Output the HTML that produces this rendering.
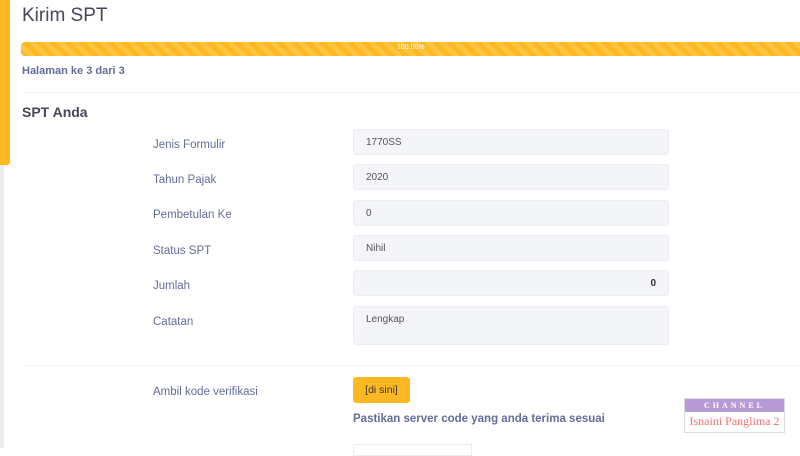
<!DOCTYPE html><html><head><style>
body{margin:0;width:800px;height:448px;overflow:hidden;background:#fff;font-family:"Liberation Sans",sans-serif;position:relative}
.a{position:absolute}
.lbl{position:absolute;left:153px;font-size:11.5px;color:#646c9a}
.in{position:absolute;left:353px;width:316px;height:26px;background:#f4f5f8;border:1px solid #ebedf2;border-radius:3px;box-sizing:border-box;font-size:10px;color:#555;padding:7px 12px}
</style></head><body>
<div class="a" style="left:0;top:0;width:4px;height:448px;background:#ebedf2"></div>
<div class="a" style="left:0;top:0;width:10px;height:165px;background:#ffb822;border-radius:0 0 3px 0"></div>
<div class="a" style="left:22px;top:5px;font-size:19px;color:#48465b">Kirim SPT</div>
<div class="a" style="left:21px;top:42px;width:790px;height:14px;border-radius:4px;background:repeating-linear-gradient(45deg,#ffb822 0 5px,#ffc440 5px 10px)"></div>
<div class="a" style="left:397px;top:44px;font-size:7px;color:#fff">100.00%</div>
<div class="a" style="left:22px;top:65px;font-size:11px;font-weight:bold;color:#646c9a">Halaman ke 3 dari 3</div>
<div class="a" style="left:22px;top:92px;width:778px;height:1px;background:#f2f3f7"></div>
<div class="a" style="left:22px;top:104px;font-size:14px;font-weight:bold;color:#48465b">SPT Anda</div>
<div class="lbl" style="top:139px">Jenis Formulir</div><div class="in" style="top:129px">1770SS</div>
<div class="lbl" style="top:174px">Tahun Pajak</div><div class="in" style="top:164px">2020</div>
<div class="lbl" style="top:209px">Pembetulan Ke</div><div class="in" style="top:200px">0</div>
<div class="lbl" style="top:245px">Status SPT</div><div class="in" style="top:235px">Nihil</div>
<div class="lbl" style="top:280px">Jumlah</div><div class="in" style="top:270px;text-align:right;font-weight:bold;color:#333">0</div>
<div class="lbl" style="top:316px">Catatan</div><div class="in" style="top:306px;height:39px">Lengkap</div>
<div class="a" style="left:22px;top:365px;width:778px;height:1px;background:#f2f3f7"></div>
<div class="lbl" style="top:386px">Ambil kode verifikasi</div>
<div class="a" style="left:353px;top:377px;width:57px;height:26px;background:#ffb822;border-radius:3px;font-size:10.5px;color:#333;text-align:center;line-height:26px">[di sini]</div>
<div class="a" style="left:353px;top:413px;font-size:11.5px;font-weight:bold;color:#646c9a">Pastikan server code yang anda terima sesuai</div>
<div class="a" style="left:353px;top:444px;width:117px;height:10px;border:1px solid #ebedf2"></div>
<div class="a" style="left:684px;top:398px;width:99px;height:33px;border:1px solid #ddd;background:#fff">
<div style="background:#b79bd6;color:#fff;font-size:8px;letter-spacing:3px;text-align:center;height:13px;line-height:13px;font-family:'Liberation Serif',serif;font-weight:bold">CHANNEL</div>
<div style="color:#f07070;font-size:12px;text-align:center;font-family:'Liberation Serif',serif;line-height:19px">Isnaini Panglima 2</div></div>
</body></html>
